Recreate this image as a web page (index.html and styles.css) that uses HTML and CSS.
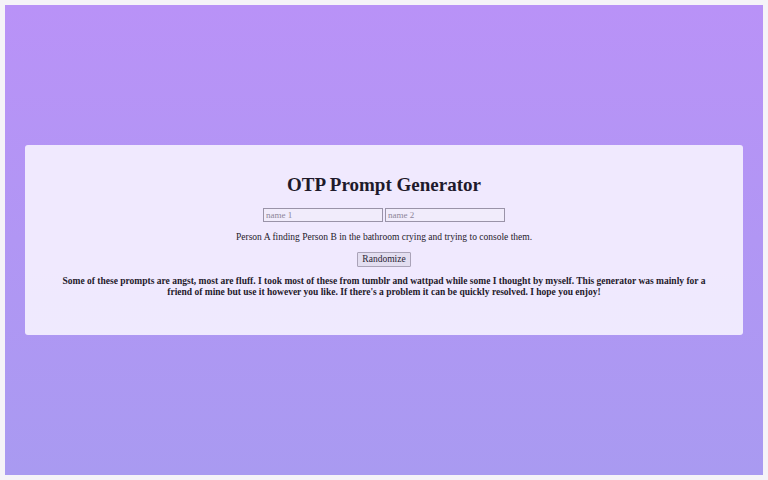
FILE: index.html
```html
<!DOCTYPE html>
<html lang="en">
<head>
    <meta charset="UTF-8">
    <meta name="viewport" content="width=device-width, initial-scale=1.0">
    <title>OTP Prompt Generator</title>
    <link rel="stylesheet" href="styles.css">
</head>
<body>
    <div class="backdrop">
        <div class="card">
            <h1>OTP Prompt Generator</h1>
            <div class="names">
                <input type="text" id="name1" placeholder="name 1">
                <input type="text" id="name2" placeholder="name 2">
            </div>
            <p id="prompt">Person A finding Person B in the bathroom crying and trying to console them.</p>
            <button onclick="randomize()">Randomize</button>
            <p class="note">Some of these prompts are angst, most are fluff. I took most of these from tumblr and wattpad while some I thought by myself. This generator was mainly for a friend of mine but use it however you like. If there's a problem it can be quickly resolved. I hope you enjoy!</p>
        </div>
    </div>

    <script>
        const prompts = [
            'Person A finding Person B in the bathroom crying and trying to console them.',
            'Person A and Person B get stuck in an elevator together.',
            'Person A falls asleep on Person B\'s shoulder during a movie.',
            'Person A teaching Person B how to cook and it goes terribly wrong.'
        ];

        function randomize() {
            const a = document.getElementById('name1').value || 'Person A';
            const b = document.getElementById('name2').value || 'Person B';
            const pick = prompts[Math.floor(Math.random() * prompts.length)];
            document.getElementById('prompt').textContent = pick
                .replace(/Person A/g, a)
                .replace(/Person B/g, b);
        }
    </script>
</body>
</html>
```

FILE: styles.css
```css
html {
    background-color: #f5f3f8;
}
body {
    margin: 5px;
    font-family: "Liberation Serif", "Times New Roman", serif;
    color: #1f1a2b;
}
.backdrop {
    height: 470px;
    display: flex;
    align-items: center;
    justify-content: center;
    padding: 0 20px;
    box-sizing: border-box;
    background: linear-gradient(to bottom, #b992f7, #a99af1);
}
.card {
    width: 100%;
    box-sizing: border-box;
    padding: 28px 30px 37px;
    background-color: rgba(248, 245, 255, 0.88);
    border-radius: 3px;
    text-align: center;
}
h1 {
    margin: 0 0 11px;
    font-size: 19px;
    line-height: 24px;
}
.names {
    font-size: 0;
}
input {
    width: 120px;
    height: 14px;
    box-sizing: border-box;
    margin: 0 1px;
    padding: 0 2px;
    font-family: inherit;
    font-size: 9px;
    border: 1px solid #9a93a8;
    background-color: #f1ecfb;
    color: #333;
}
input::placeholder {
    color: #8d8699;
}
#prompt {
    margin: 9px 0 5px;
    font-size: 9.5px;
    line-height: 12px;
}
button {
    font-family: inherit;
    font-size: 9.5px;
    padding: 1px 4px;
    height: 15px;
    line-height: 11px;
    border: 1px solid #aaa3b8;
    background-color: #e3def0;
    color: #2a2535;
    border-radius: 1px;
}
.note {
    margin: 9px 0 0;
    font-size: 9.5px;
    line-height: 11px;
    font-weight: bold;
}
```
